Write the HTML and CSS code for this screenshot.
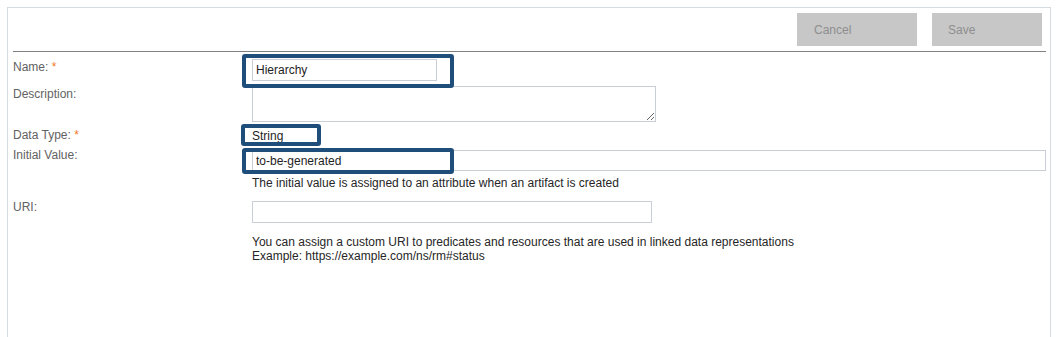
FILE: index.html
```html
<!DOCTYPE html>
<html>
<head>
<meta charset="utf-8">
<link rel="stylesheet" href="styles.css">
</head>
<body>
<div class="panel">
  <div class="header">
    <button class="btn btn-cancel" type="button">Cancel</button>
    <button class="btn btn-save" type="button">Save</button>
  </div>
  <div class="form">
    <div class="row row-name">
      <div class="label lab-name">Name: <span class="req">*</span></div>
      <div class="control"><input class="input input-name" type="text" value="Hierarchy"></div>
    </div>
    <div class="row row-desc">
      <div class="label lab-desc">Description:</div>
      <div class="control"><textarea class="textarea"></textarea></div>
    </div>
    <div class="row row-type">
      <div class="label lab-type">Data Type: <span class="req">*</span></div>
      <div class="control"><div class="static">String</div></div>
    </div>
    <div class="row row-init">
      <div class="label lab-init">Initial Value:</div>
      <div class="control">
        <input class="input input-init" type="text" value="to-be-generated">
        <div class="help help-init">The initial value is assigned to an attribute when an artifact is created</div>
      </div>
    </div>
    <div class="row row-uri">
      <div class="label lab-uri">URI:</div>
      <div class="control">
        <input class="input input-uri" type="text" value="">
        <div class="help help-uri">You can assign a custom URI to predicates and resources that are used in linked data representations<br>Example: https://example.com/ns/rm#status</div>
      </div>
    </div>
  </div>
  <div class="annot annot-name"></div>
  <div class="annot annot-type"></div>
  <div class="annot annot-init"></div>
</div>
</body>
</html>
```

FILE: styles.css
```css
html, body {
  margin: 0;
  padding: 0;
  background: #ffffff;
  overflow: hidden;
}

body {
  font-family: "Liberation Sans", Arial, sans-serif;
  font-size: 12px;
  color: #222222;
}

.panel {
  position: relative;
  box-sizing: border-box;
  width: 1044px;
  height: 345px;
  margin: 7px 0 0 7px;
  border: 1px solid #d6dbe1;
  background: #ffffff;
}

.header {
  box-sizing: border-box;
  height: 44px;
  margin: 0 4px 0 5px;
  padding: 5px 4px 0 0;
  display: flex;
  justify-content: flex-end;
  align-items: flex-start;
  gap: 15px;
  border-bottom: 1px solid #808080;
}

.btn {
  box-sizing: border-box;
  height: 33px;
  border: none;
  background: #c7c7c7;
  color: #8e8e8e;
  font-family: "Liberation Sans", Arial, sans-serif;
  font-size: 12px;
  text-align: left;
  padding: 0 0 0 17px;
  display: flex;
  align-items: center;
}

.btn-cancel { width: 120px; }
.btn-save { width: 110px; padding-left: 16px; }

.form {
  padding: 0 4px 0 5px;
}

.row {
  display: flex;
  align-items: flex-start;
}

.label {
  width: 239px;
  flex: none;
  line-height: 14px;
  color: #626262;
}

.req {
  color: #f07a28;
}

.control {
  flex: 1;
  min-width: 0;
}

.input {
  display: block;
  box-sizing: border-box;
  margin: 0;
  border: 1px solid #c9ced6;
  background: #ffffff;
  font-family: "Liberation Sans", Arial, sans-serif;
  font-size: 12px;
  color: #1e1e1e;
  padding: 0 0 0 3px;
  outline: none;
}

.input-name { width: 185px; height: 22px; }
.input-init { width: 100%; height: 21px; }
.input-uri { width: 400px; height: 22px; }

.textarea {
  display: block;
  box-sizing: border-box;
  margin: 0;
  width: 404px;
  height: 36px;
  border: 1px solid #c9ced6;
  font-family: "Liberation Sans", Arial, sans-serif;
  font-size: 12px;
  padding: 2px 3px;
}

.static {
  line-height: 14px;
  color: #1e1e1e;
}

.help {
  line-height: 14px;
  color: #262626;
}

.row-name { margin-top: 7px; }
.row-desc { margin-top: 5px; }
.row-type { margin-top: 7px; }
.row-init { margin-top: 7px; }
.row-uri { margin-top: 11px; }

.lab-name { margin-top: 1px; }
.lab-desc { margin-top: 1px; }
.lab-type { margin-top: -1px; }
.lab-init { margin-top: -2px; }
.lab-uri { margin-top: -1px; }

.help-init { margin-top: 5px; }
.help-uri { margin-top: 12px; }

.annot {
  position: absolute;
  box-sizing: border-box;
  border: 4px solid #1f4e7a;
  border-radius: 3px;
  pointer-events: none;
}

.annot-name { left: 234px; top: 46px; width: 212px; height: 34px; }
.annot-type { left: 233px; top: 116px; width: 80px; height: 22px; }
.annot-init { left: 234px; top: 140px; width: 212px; height: 26px; }
```
